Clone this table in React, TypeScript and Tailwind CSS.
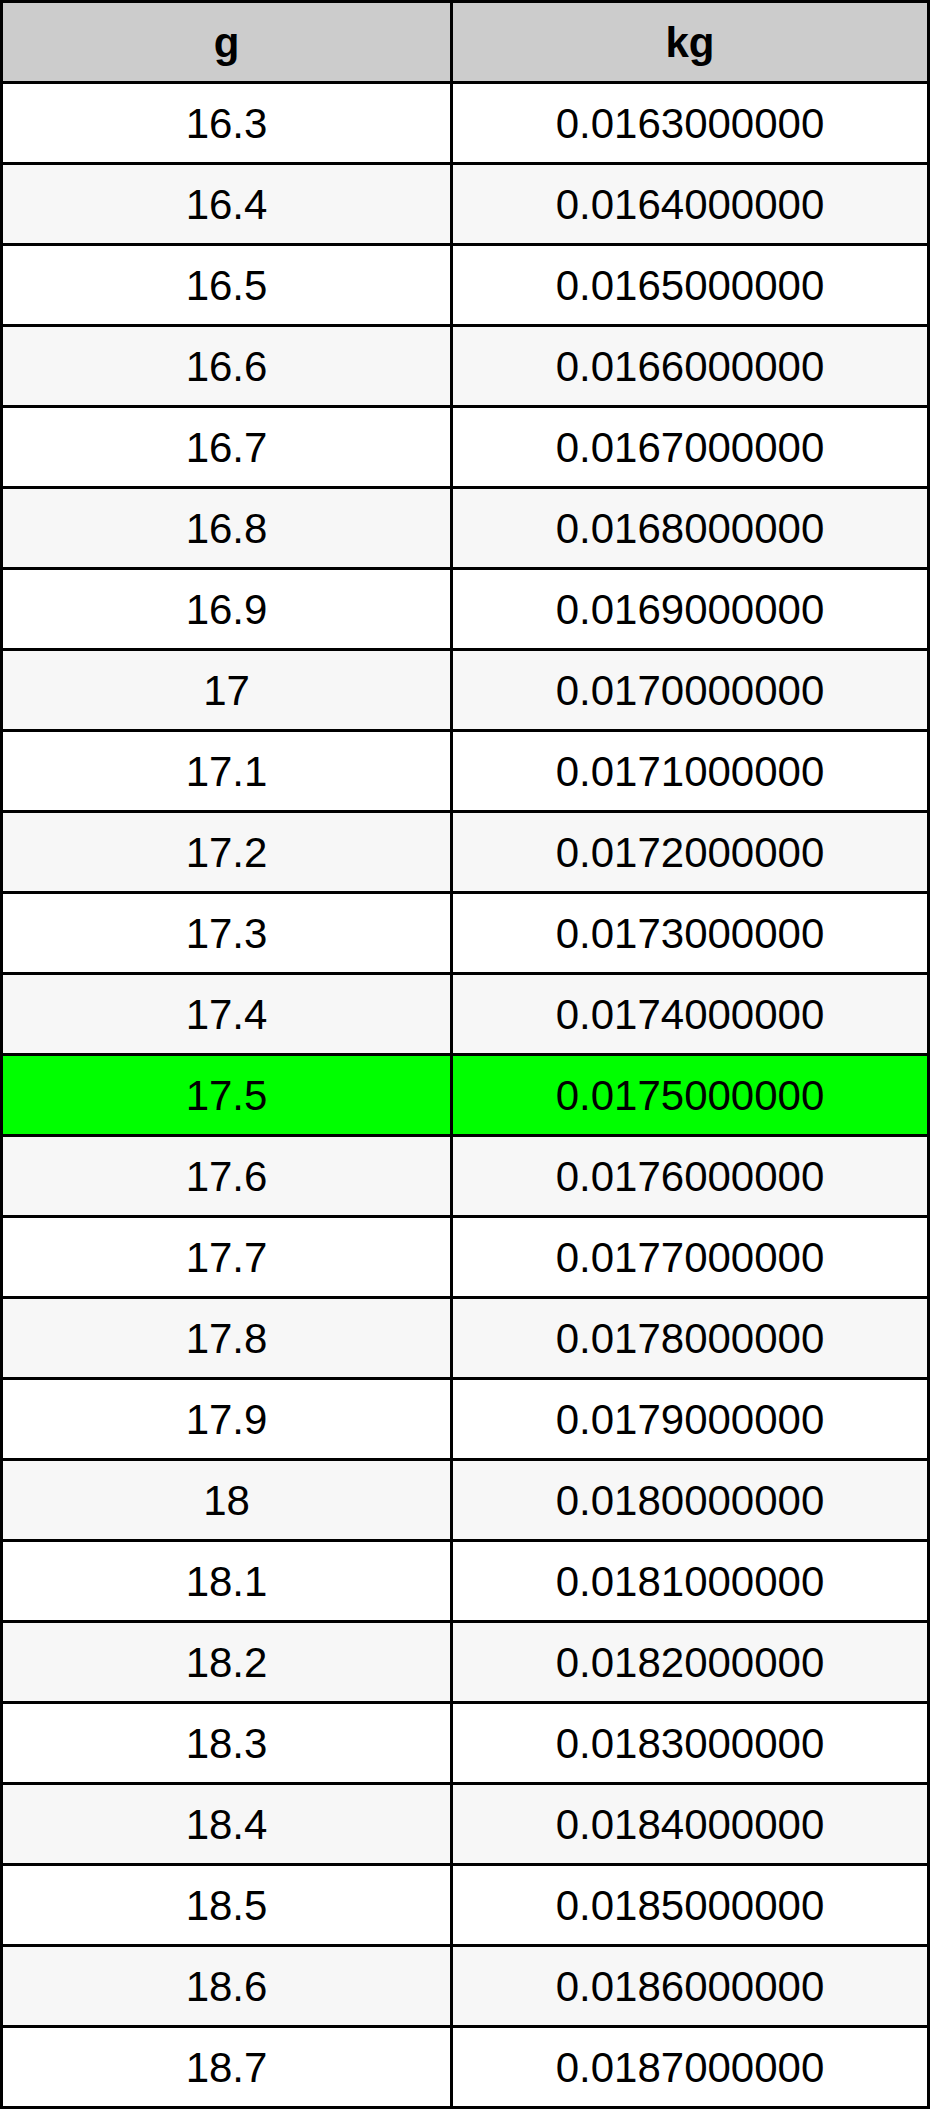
import { FC } from 'react'

const rows: string[][] = []
for (let i = 163; i <= 187; i++) {
  const g = i % 10 === 0 ? String(i / 10) : (i / 10).toFixed(1)
  const kg = '0.0' + String(i) + '000000'
  rows.push([g, kg])
}

const App: FC = () => {
  return (
    <div className="w-[930px] bg-white" style={{ fontFamily: '"Liberation Sans", Arial, sans-serif' }}>
      <div className="w-[930px] border-l-[3px] border-black">
        <div className="flex h-[81px] border-t-[3px] border-black bg-[#cccccc] text-[42px] font-bold text-black">
          <div className="flex w-[450px] items-center justify-center border-r-[3px] border-black">g</div>
          <div className="flex flex-1 items-center justify-center border-r-[3px] border-black">kg</div>
        </div>
        {rows.map((item, idx) => {
          const hl = item[0] === '17.5'
          const bg = hl ? 'bg-[#00ff00]' : idx % 2 === 0 ? 'bg-white' : 'bg-[#f7f7f7]'
          return (
            <div key={item[0]} className={`flex h-[81px] border-t-[3px] border-black text-[42px] text-black ${bg}`}>
              <div className="flex w-[450px] items-center justify-center border-r-[3px] border-black">{item[0]}</div>
              <div className="flex flex-1 items-center justify-center border-r-[3px] border-black">{item[1]}</div>
            </div>
          )
        })}
        <div className="h-[3px] bg-black"></div>
      </div>
    </div>
  )
}

export default App
